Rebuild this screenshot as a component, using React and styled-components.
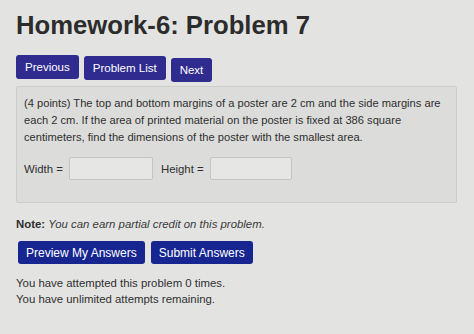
import { createGlobalStyle, styled } from "styled-components";

const Global = createGlobalStyle`
    body {
        margin: 0;
        background: #e3e4e2;
        font-family: "Liberation Sans", Arial, sans-serif;
        color: #2f2f2f;
    }
`;

const Pagina = styled.div`
    padding: 10px 17px 0 16px;
`;

const Titulo = styled.h1`
    margin: 0;
    font-size: 25.7px;
    line-height: 30px;
    font-weight: bold;
    color: #2c2c2c;
`;

const Navegacao = styled.div`
    display: flex;
    gap: 5px;
    margin-top: 15px;
    align-items: flex-start;
`;

const Botao = styled.button`
    height: ${p => p.$altura || 24}px;
    padding: 0 ${p => p.$lado || 9}px;
    margin-top: ${p => p.$desce || 0}px;
    border: none;
    border-radius: 3px;
    background: ${p => p.$cor || "#2f2b8f"};
    color: #fff;
    font-family: inherit;
    font-size: ${p => p.$tamanho || 11.5}px;
    cursor: pointer;
`;

const Caixa = styled.div`
    margin-top: 4px;
    background: #dcdddb;
    border: 1px solid #cdcecc;
    border-radius: 2px;
    padding: 8px 10px 22px 7px;
`;

const Enunciado = styled.p`
    margin: 0;
    font-size: 11.15px;
    line-height: 17px;
`;

const Linha = styled.div`
    display: flex;
    align-items: center;
    gap: 6px;
    margin-top: 11px;
    font-size: 11.4px;
`;

const Campo = styled.input`
    width: ${p => p.$largura}px;
    height: 23px;
    box-sizing: border-box;
    border: 1px solid #c4c5c3;
    border-radius: 2px;
    background: #e6e7e5;
    margin-right: 2px;
`;

const Nota = styled.p`
    margin: 13px 0 0;
    font-size: 11.4px;
    line-height: 16px;

    em {
        color: #3a3a3a;
    }
`;

const Acoes = styled.div`
    display: flex;
    gap: 6px;
    margin: 9px 0 0 2px;
`;

const Tentativas = styled.p`
    margin: 11px 0 0;
    font-size: 11.4px;
    line-height: 16px;
`;

export default function App() {
    return (
        <Pagina>
            <Global />
            <Titulo>Homework-6: Problem 7</Titulo>
            <Navegacao>
                <Botao $lado={9}>Previous</Botao>
                <Botao $lado={9} $desce={1}>Problem List</Botao>
                <Botao $lado={9} $desce={3}>Next</Botao>
            </Navegacao>
            <Caixa>
                <Enunciado>
                    (4 points) The top and bottom margins of a poster are 2 cm and the side margins are
                    each 2 cm. If the area of printed material on the poster is fixed at 386 square
                    centimeters, find the dimensions of the poster with the smallest area.
                </Enunciado>
                <Linha>
                    Width =
                    <Campo $largura={84} />
                    Height =
                    <Campo $largura={82} />
                </Linha>
            </Caixa>
            <Nota>
                <strong>Note:</strong> <em>You can earn partial credit on this problem.</em>
            </Nota>
            <Acoes>
                <Botao $cor="#16258f" $altura={23} $lado={8} $tamanho={12}>Preview My Answers</Botao>
                <Botao $cor="#16258f" $altura={23} $lado={8} $tamanho={12}>Submit Answers</Botao>
            </Acoes>
            <Tentativas>
                You have attempted this problem 0 times.
                <br />
                You have unlimited attempts remaining.
            </Tentativas>
        </Pagina>
    );
}
